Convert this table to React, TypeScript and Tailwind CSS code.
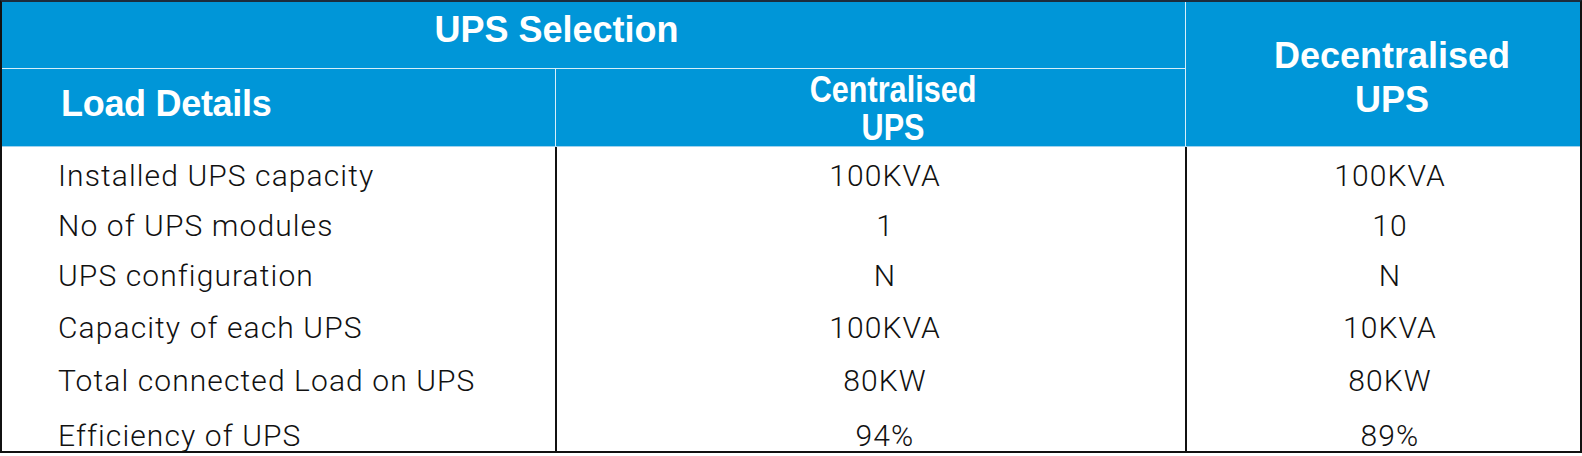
const rows = [
  { label: 'Installed UPS capacity', central: '100KVA', decentral: '100KVA', h: 'h-[50px]' },
  { label: 'No of UPS modules', central: '1', decentral: '10', h: 'h-[49px]' },
  { label: 'UPS configuration', central: 'N', decentral: 'N', h: 'h-[52px]' },
  { label: 'Capacity of each UPS', central: '100KVA', decentral: '10KVA', h: 'h-[52px]' },
  { label: 'Total connected Load on UPS', central: '80KW', decentral: '80KW', h: 'h-[54px]' },
  { label: 'Efficiency of UPS', central: '94%', decentral: '89%', h: 'h-[43px] pt-[13px]' },
]

const sans = "font-['Liberation_Sans',Arial,sans-serif]"
const light = "font-['Roboto','Liberation_Sans',sans-serif] font-light"

function Column({ field, className }: { field: 'label' | 'central' | 'decentral'; className: string }) {
  return (
    <div className={`flex flex-col pt-[4px] ${className}`}>
      {rows.map((r) => (
        <div key={r.label} className={`flex items-center ${r.h} ${field === 'label' ? '' : 'justify-center'}`}>
          {r[field]}
        </div>
      ))}
    </div>
  )
}

export default function App() {
  return (
    <div className={`w-[1582px] h-[456px] bg-white ${sans}`}>
      <div className="w-[1582px] h-[453px] border-2 border-[#111] border-t-[#1c2c3c] flex flex-col">
        {/* header */}
        <div className="flex h-[144px] bg-[#0096d8] text-white font-bold">
          <div className="w-[1183px] flex flex-col">
            <div className="h-[66px] flex items-center justify-center pr-[74px] pb-[10px] text-[36px] leading-none">
              UPS Selection
            </div>
            <div className="h-px bg-[#d6eef9]" />
            <div className="h-[77px] flex">
              <div className="w-[553px] flex items-center pl-[59px] pb-[8px] text-[36px] leading-none tracking-[-0.3px]">
                Load Details
              </div>
              <div className="w-px bg-[#d6eef9]" />
              <div className="flex-1 flex flex-col items-center justify-center pl-[46px] pt-[2px] text-[36px] leading-[38px]">
                <span className="inline-block scale-x-[0.85]">Centralised</span>
                <span className="inline-block scale-x-[0.85]">UPS</span>
              </div>
            </div>
          </div>
          <div className="w-px bg-[#d6eef9]" />
          <div className="flex-1 flex flex-col items-center justify-center pl-[18px] pt-[8px] text-[36px] leading-[44px]">
            <span>Decentralised</span>
            <span>UPS</span>
          </div>
        </div>
        <div className="h-px bg-[#9fd3ef]" />

        {/* body */}
        <div className={`flex-1 flex text-[30px] leading-none text-[#111] tracking-[1.1px] ${light}`}>
          <Column field="label" className="w-[555px] pl-[56px] border-r-2 border-[#111]" />
          <Column field="central" className="w-[630px] pl-[28px] border-r-2 border-[#111]" />
          <Column field="decentral" className="flex-1 pl-[13px]" />
        </div>
      </div>
    </div>
  )
}
